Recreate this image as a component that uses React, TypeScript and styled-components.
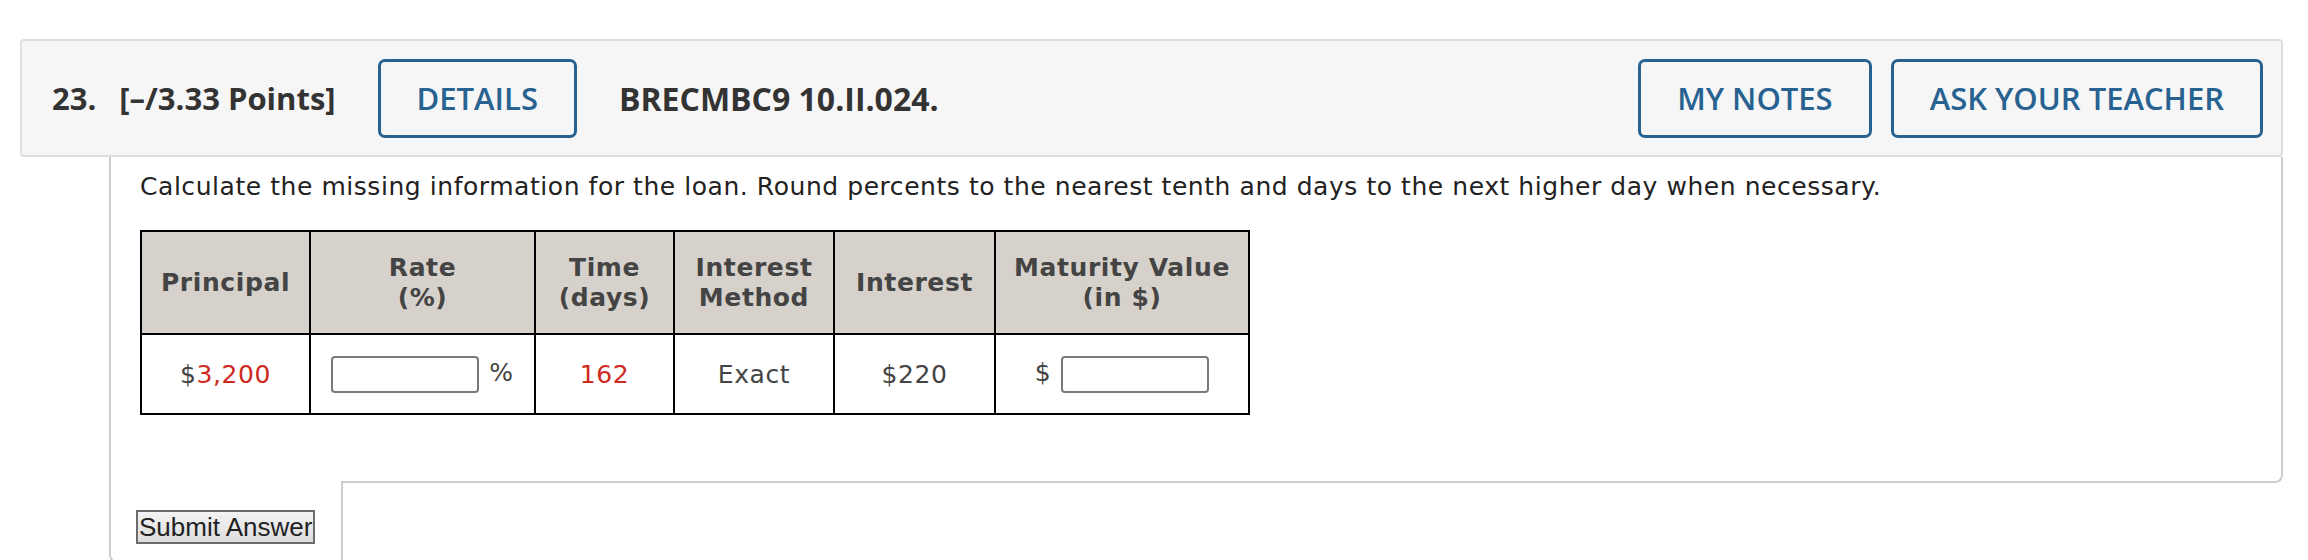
import React from 'react';
import styled, { createGlobalStyle } from 'styled-components';

const GlobalStyle = createGlobalStyle`
  html, body {
    margin: 0;
    padding: 0;
    background: #fff;
  }
`;

interface ICell {
  label: React.ReactNode;
}

const headers: ICell[] = [
  { label: 'Principal' },
  { label: <>Rate<br />(%)</> },
  { label: <>Time<br />(days)</> },
  { label: <>Interest<br />Method</> },
  { label: 'Interest' },
  { label: <>Maturity Value<br />(in $)</> },
];

const columnWidths = [169, 225, 139, 160, 161, 254];

export default function App() {
  return (
    <Page>
      <GlobalStyle />
      <Header>
        <QuestionNumber>23.</QuestionNumber>
        <Points>[–/3.33 Points]</Points>
        <OutlineButton>DETAILS</OutlineButton>
        <Code>BRECMBC9 10.II.024.</Code>
        <Spacer />
        <OutlineButton>MY NOTES</OutlineButton>
        <OutlineButton>ASK YOUR TEACHER</OutlineButton>
      </Header>

      <Panel>
        <Instructions>
          Calculate the missing information for the loan. Round percents to the nearest tenth and days to the next
          higher day when necessary.
        </Instructions>
        <LoanTable>
          <colgroup>
            {columnWidths.map((width, index) => (
              <col key={index} style={{ width }} />
            ))}
          </colgroup>
          <thead>
            <tr>
              {headers.map((header, index) => (
                <HeadCell key={index}>{header.label}</HeadCell>
              ))}
            </tr>
          </thead>
          <tbody>
            <tr>
              <BodyCell>
                $<Given>3,200</Given>
              </BodyCell>
              <BodyCell>
                <InputGroup>
                  <AnswerInput type="text" />
                  <Unit>%</Unit>
                </InputGroup>
              </BodyCell>
              <BodyCell>
                <Given>162</Given>
              </BodyCell>
              <BodyCell>Exact</BodyCell>
              <BodyCell>$220</BodyCell>
              <BodyCell>
                <InputGroup>
                  <Unit>$</Unit>
                  <AnswerInput type="text" />
                </InputGroup>
              </BodyCell>
            </tr>
          </tbody>
        </LoanTable>
      </Panel>

      <SubmitTab>
        <SubmitButton type="button">Submit Answer</SubmitButton>
      </SubmitTab>
    </Page>
  );
}

const Page = styled.div`
  box-sizing: border-box;
  width: 2283px;
  padding: 39px 0 0 20px;
`;

const Header = styled.div`
  box-sizing: border-box;
  display: flex;
  align-items: center;
  height: 118px;
  padding: 0 18px 0 30px;
  background: #f6f6f6;
  border: 2px solid #dedede;
  border-radius: 4px;
  font-family: 'Open Sans', sans-serif;
  font-size: 31px;
  color: #333;
`;

const QuestionNumber = styled.span`
  font-weight: 700;
  margin-right: 23px;
`;

const Points = styled.span`
  font-weight: 700;
  margin-right: 42px;
`;

const Code = styled.span`
  font-weight: 700;
  font-size: 32px;
  margin-left: 42px;
`;

const Spacer = styled.div`
  flex: 1;
`;

const OutlineButton = styled.button`
  box-sizing: border-box;
  height: 79px;
  padding: 0 36px;
  margin-left: 19px;
  background: transparent;
  border: 3px solid #286291;
  border-radius: 7px;
  font-family: 'Open Sans', sans-serif;
  font-size: 31px;
  font-weight: 600;
  color: #286291;
  cursor: pointer;

  &:first-of-type {
    margin-left: 0;
  }
`;

const Panel = styled.div`
  box-sizing: border-box;
  width: 2174px;
  margin-left: 89px;
  padding: 14px 0 66px 29px;
  border: 2px solid #cccccc;
  border-top: none;
  border-bottom-right-radius: 8px;
  font-family: 'DejaVu Sans', Verdana, sans-serif;
  color: #222;
`;

const Instructions = styled.p`
  margin: 0 0 28px;
  font-size: 25px;
  letter-spacing: 0.55px;
  line-height: 31px;
`;

const LoanTable = styled.table`
  border-collapse: collapse;
  table-layout: fixed;
  width: 1108px;
  font-family: 'DejaVu Sans', Verdana, sans-serif;
  font-size: 25px;
  letter-spacing: 0.6px;
`;

const HeadCell = styled.th`
  height: 101px;
  padding: 0 4px;
  background: #d6d2cb;
  border: 2px solid #000;
  font-weight: 700;
  line-height: 30px;
  color: #444;
  text-align: center;
`;

const BodyCell = styled.td`
  height: 78px;
  padding: 0 4px;
  border: 2px solid #000;
  text-align: center;
  color: #444;
  white-space: nowrap;
`;

const Given = styled.span`
  color: #cf2a1f;
`;

const InputGroup = styled.div`
  display: flex;
  align-items: center;
  justify-content: center;
  gap: 10px;
`;

const AnswerInput = styled.input`
  box-sizing: border-box;
  width: 148px;
  height: 37px;
  border: 2px solid #7a7a7a;
  border-radius: 4px;
  background: #fff;
`;

const Unit = styled.span`
  color: #444;
  margin-top: -4px;
`;

const SubmitTab = styled.div`
  box-sizing: border-box;
  width: 234px;
  height: 82px;
  margin: -2px 0 0 89px;
  padding: 29px 0 0 25px;
  background: #fff;
  border: 2px solid #cccccc;
  border-top: none;
  border-bottom-left-radius: 8px;
`;

const SubmitButton = styled.button`
  box-sizing: border-box;
  height: 34px;
  padding: 0 1px;
  background: linear-gradient(#f4f4f4, #dcdcdc);
  border: 2px solid #6b6b6b;
  border-radius: 0;
  font-family: 'Liberation Sans', Arial, sans-serif;
  font-size: 26px;
  line-height: 28px;
  color: #222;
  cursor: pointer;
`;
